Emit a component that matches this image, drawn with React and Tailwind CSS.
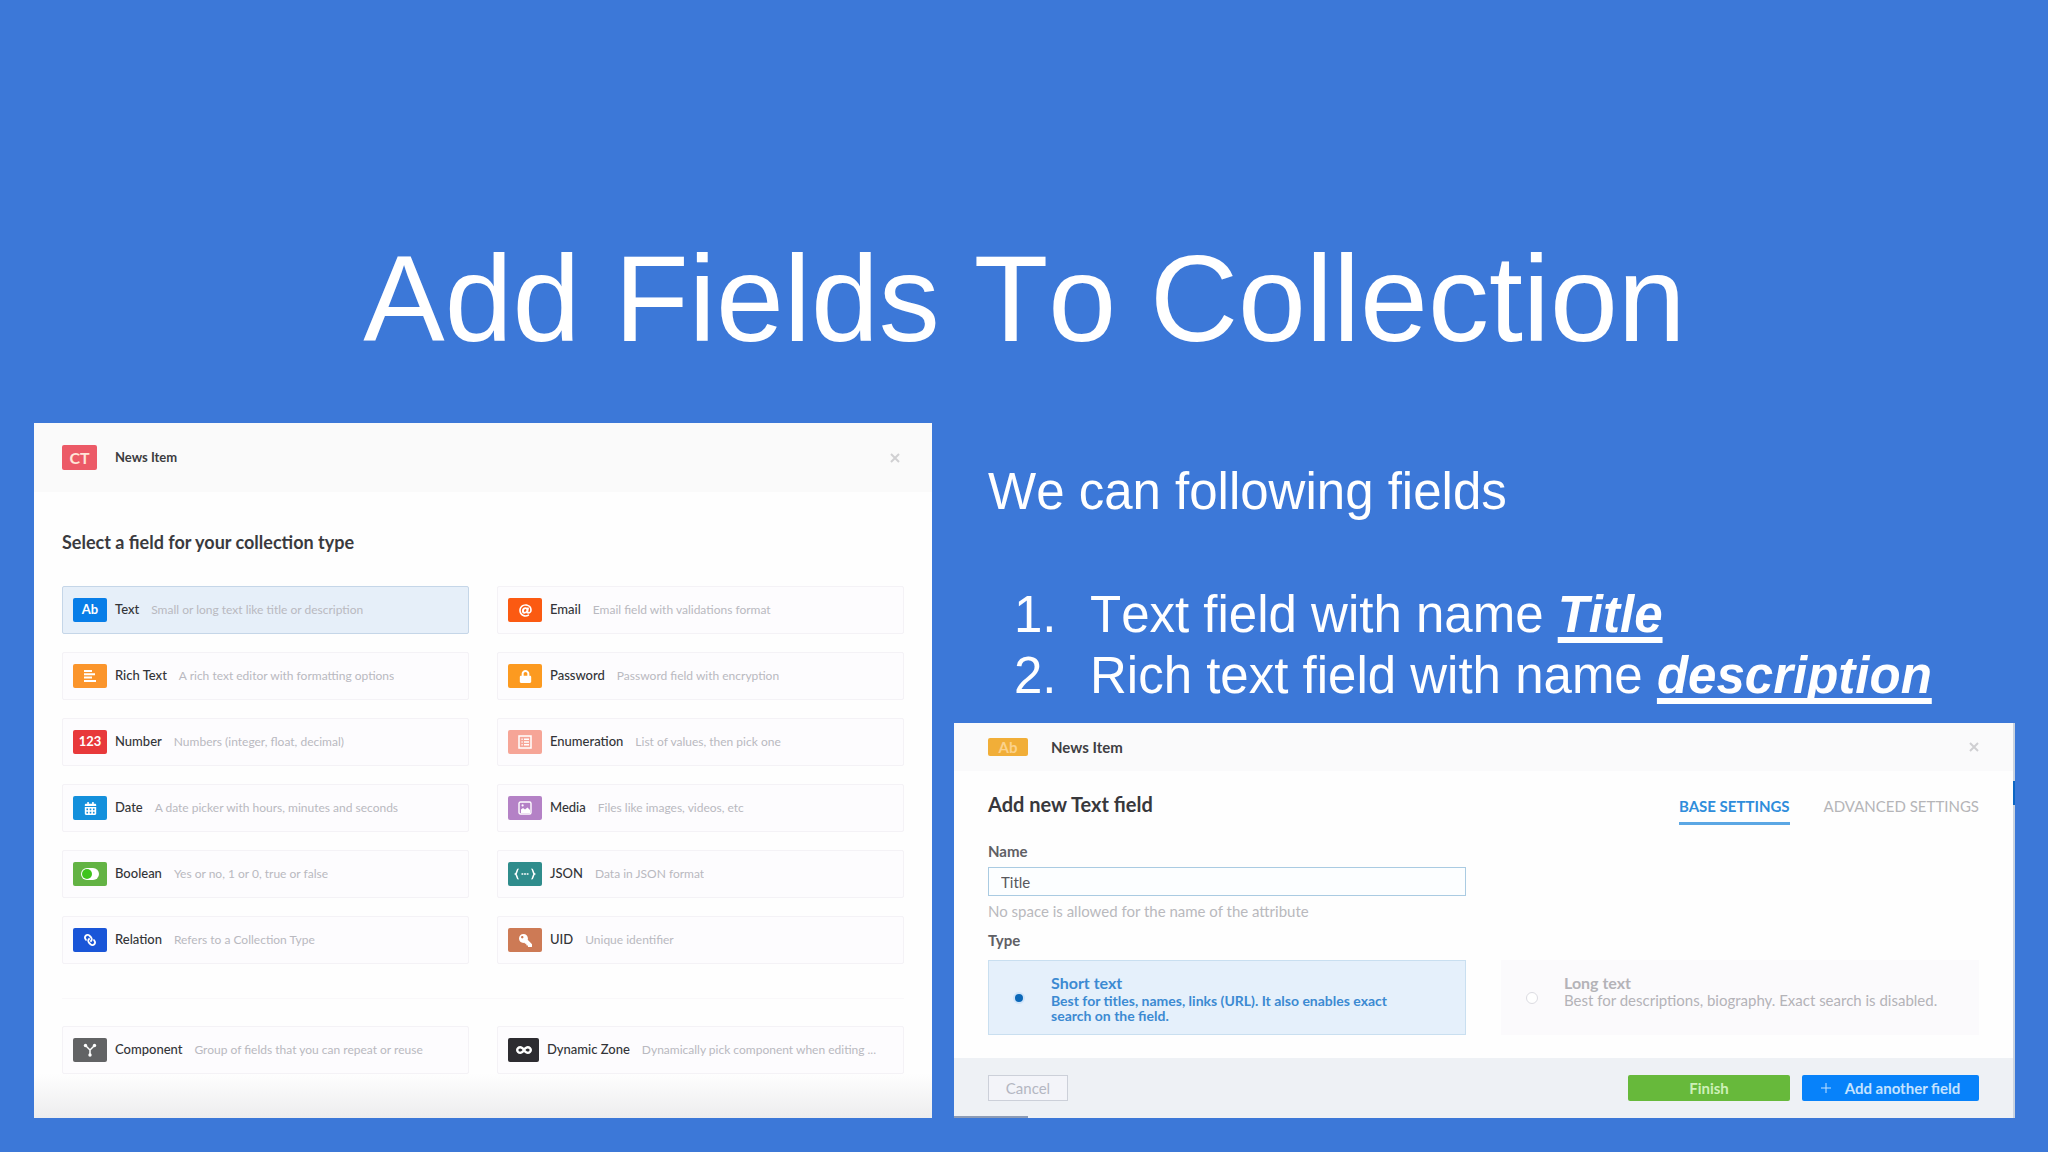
import React, { useState } from "react";
import { FaAt, FaLock, FaCalendarAlt, FaLink, FaKey, FaInfinity } from "react-icons/fa";

const RichTextIcon = () => (
  <svg viewBox="0 0 14 12" className="h-3 w-3.5" fill="currentColor">
    <path d="M1 0h8v2H1zM1 3.3h11v2H1zM1 6.6h8v2H1zM1 10h12v2H1z" />
  </svg>
);

const ListIcon = () => (
  <svg viewBox="0 0 14 14" className="size-3.5" fill="none" stroke="currentColor" strokeWidth="1.5">
    <path d="M1 1h12v12H1zM3.5 4.2h1.2M6 4.2h5M3.5 7h1.2M6 7h5M3.5 9.8h1.2M6 9.8h5" />
  </svg>
);

const MediaIcon = () => (
  <svg viewBox="0 0 14 14" className="size-3.5" fill="none" stroke="currentColor" strokeWidth="1.4">
    <rect x="1" y="1" width="12" height="12" rx="1.5" />
    <path d="M3 12V8.5l2-1.5 2 1.5 2.5-2L12 9v3z" fill="currentColor" stroke="none" />
    <circle cx="4.6" cy="4.4" r="1.1" fill="currentColor" stroke="none" />
  </svg>
);

const ToggleIcon = () => (
  <svg viewBox="0 0 20 14" className="h-3.5 w-5">
    <rect x="1" y="1" width="18" height="12" rx="6" fill="#ffffff" />
    <circle cx="7" cy="7" r="5" fill="#3fc41c" />
  </svg>
);

const JsonIcon = () => (
  <svg viewBox="0 0 22 12" className="h-3 w-5.5" fill="none" stroke="currentColor" strokeWidth="1.5">
    <path d="M4.5 1C2.500 1 3.500 5 1.500 6c2 1 1 5 3 5M17.500 1c2 0 1 4 3 5-2 1-1 5-3 5" />
    <path d="M7.500 6h7" strokeDasharray="1.800 0.800" />
  </svg>
);

const ComponentIcon = () => (
  <svg viewBox="0 0 14 14" className="size-3.5" fill="none" stroke="currentColor" strokeWidth="1.5">
    <path d="M7 12V7L3 3M7 7l4-4" />
    <g fill="currentColor" stroke="none">
      <circle cx="2.500" cy="2.500" r="1.700" />
      <circle cx="11.500" cy="2.500" r="1.700" />
      <circle cx="7" cy="12" r="1.700" />
    </g>
  </svg>
);

const fields = [
  { name: "Text", note: "Small or long text like title or description", color: "bg-[#087ee8]", icon: "Ab" },
  { name: "Email", note: "Email field with validations format", color: "bg-[#fb5a12]", icon: <FaAt /> },
  { name: "Rich Text", note: "A rich text editor with formatting options", color: "bg-[#fb952c]", icon: <RichTextIcon /> },
  { name: "Password", note: "Password field with encryption", color: "bg-[#fc9a20]", icon: <FaLock /> },
  { name: "Number", note: "Numbers (integer, float, decimal)", color: "bg-[#e8393b]", icon: "123" },
  { name: "Enumeration", note: "List of values, then pick one", color: "bg-[#f6a597]", icon: <ListIcon /> },
  { name: "Date", note: "A date picker with hours, minutes and seconds", color: "bg-[#1490dc]", icon: <FaCalendarAlt /> },
  { name: "Media", note: "Files like images, videos, etc", color: "bg-[#b481c6]", icon: <MediaIcon /> },
  { name: "Boolean", note: "Yes or no, 1 or 0, true or false", color: "bg-[#63b344]", icon: <ToggleIcon /> },
  { name: "JSON", note: "Data in JSON format", color: "bg-[#2f8c8c]", icon: <JsonIcon /> },
  { name: "Relation", note: "Refers to a Collection Type", color: "bg-[#1a56d8]", icon: <FaLink className="size-3 -scale-x-100" /> },
  { name: "UID", note: "Unique identifier", color: "bg-[#cd7a55]", icon: <FaKey className="-scale-x-100" /> },
];

const extras = [
  { name: "Component", note: "Group of fields that you can repeat or reuse", color: "bg-[#626365]", icon: <ComponentIcon /> },
  { name: "Dynamic Zone", note: "Dynamically pick component when editing ...", color: "bg-[#2d2c31]", icon: <FaInfinity className="size-4" />, narrow: true },
];

function FieldCard({ field, selected, onSelect }) {
  return (
    <button
      type="button"
      onClick={onSelect}
      aria-pressed={selected}
      className={`flex h-12 min-w-0 items-center gap-2 rounded-xs border px-2.5 text-left ${
        selected ? "border-[#c5d6e8] bg-[#e6eff9]" : "border-[#f4f2f6] bg-[#fdfcfe]"
      }`}
    >
      <span
        className={`flex h-6 shrink-0 items-center justify-center rounded-xs text-[13px] font-bold text-white ${
          field.narrow ? "w-[31px]" : "w-[34px]"
        } ${field.color}`}
      >
        {field.icon}
      </span>
      <span className="shrink-0 text-[13px] font-medium text-[#333438]">{field.name}</span>
      <span className="truncate pl-1 text-xs text-[#b9b9c0]">{field.note}</span>
    </button>
  );
}

function CloseIcon() {
  return (
    <svg viewBox="0 0 10 10" className="size-2.5" fill="none" stroke="currentColor" strokeWidth="2">
      <path d="M1 1l8 8M9 1L1 9" />
    </svg>
  );
}

function FieldPicker() {
  const [picked, setPicked] = useState("Text");
  const card = (f) => (
    <FieldCard key={f.name} field={f} selected={picked === f.name} onSelect={() => setPicked(f.name)} />
  );
  return (
    <section className="flex flex-col bg-[#fefefe] font-[Lato,sans-serif]">
      <header className="flex h-[69px] items-center bg-[#fafafa] px-7">
        <span className="flex h-[25px] w-[35px] items-center justify-center rounded-xs bg-[#ec5a67] text-base font-bold text-[#ffe6d8]">CT</span>
        <span className="ml-[18px] text-[13px] font-bold text-[#3c3c40]">News Item</span>
        <button type="button" aria-label="Close" className="ml-auto p-1 text-[#d0d0d2]">
          <CloseIcon />
        </button>
      </header>
      <div className="px-7 pt-9">
        <h2 className="text-lg leading-7 font-bold text-[#3a3a3e]">Select a field for your collection type</h2>
        <div className="mt-[30px] grid grid-cols-2 gap-x-7 gap-y-[18px]">{fields.map(card)}</div>
        <hr className="mt-[34px] border-[#f9f8fa]" />
        <div className="mt-[27px] grid grid-cols-2 gap-x-7">{extras.map(card)}</div>
      </div>
      <div className="mt-auto h-11 bg-linear-to-b from-[#fefefe] to-[#ededee]" />
    </section>
  );
}

function TypeOption({ value, title, note, checked, onChange }) {
  return (
    <label
      className={`flex h-[75px] items-center border pl-6 ${
        checked ? "border-[#c9dff0] bg-[#e5f0fb] pr-12 text-[#3c8ad2]" : "border-[#fbfafc] bg-[#fbfafc] pr-4 text-[#b4b3b8]"
      }`}
    >
      <input
        type="radio"
        name="type"
        value={value}
        checked={checked}
        onChange={onChange}
        className="size-3 shrink-0 appearance-none rounded-full border border-[#dcdce2] bg-white checked:border-2 checked:border-[#cfe4fa] checked:bg-[#0b68b8]"
      />
      <span className="ml-[26px] flex flex-col self-start pt-3">
        <span className="text-base leading-5 font-bold">{title}</span>
        <span className={`leading-[15px] ${checked ? "text-sm font-bold" : "text-[15px]"}`}>{note}</span>
      </span>
    </label>
  );
}

function FieldEditor() {
  const [type, setType] = useState("short");
  const [name, setName] = useState("Title");
  return (
    <section className="relative flex flex-col border-r-2 border-[#c9d3e0] bg-[#fefefe] font-[Lato,sans-serif]">
      <span className="absolute top-[58px] -right-0.5 h-6 w-0.5 bg-[#0d67c4]" />
      <span className="absolute bottom-0 left-0 h-0.5 w-[74px] bg-[#8c9bb5]" />
      <header className="flex h-12 items-center bg-[#fafafb] px-[34px]">
        <span className="flex h-[18px] w-10 items-center justify-center rounded-xs bg-[#f1ae38] text-[15px] font-bold text-[#fbd28c]">Ab</span>
        <span className="ml-[23px] text-[15px] font-bold text-[#3f3f43]">News Item</span>
        <button type="button" aria-label="Close" className="ml-auto text-[#cfcfd2]">
          <CloseIcon />
        </button>
      </header>
      <div className="px-[34px] pt-[19px]">
        <div className="flex items-start justify-between">
          <h2 className="text-xl leading-7 font-bold text-[#38383c]">Add new Text field</h2>
          <nav className="flex gap-[34px] pt-1.5 text-[15px] leading-5 font-bold">
            <a href="#base" className="border-b-3 border-[#5ba7e4] pb-1.5 text-[#2f8ddb]">BASE SETTINGS</a>
            <a href="#advanced" className="pb-1.5 font-normal text-[#b5b5b8]">ADVANCED SETTINGS</a>
          </nav>
        </div>
        <div className="mt-[18px] grid grid-cols-2 gap-x-[35px]">
          <div className="flex flex-col">
            <label htmlFor="field-name" className="text-[15px] leading-4 font-bold text-[#606065]">Name</label>
            <input
              id="field-name"
              value={name}
              onChange={(e) => setName(e.target.value)}
              className="mt-2 h-[29px] border border-[#aacbe2] bg-[#fcfeff] px-3 text-[15px] text-[#58585c] outline-none"
            />
            <p className="mt-[7px] text-[15px] leading-4 text-[#b9b9bd]">No space is allowed for the name of the attribute</p>
          </div>
        </div>
        <fieldset className="mt-[13px]">
          <legend className="text-[15px] leading-4 font-bold text-[#606065]">Type</legend>
          <div className="mt-3 grid grid-cols-2 gap-x-[35px]">
            <TypeOption
              value="short"
              title="Short text"
              note="Best for titles, names, links (URL). It also enables exact search on the field."
              checked={type === "short"}
              onChange={() => setType("short")}
            />
            <TypeOption
              value="long"
              title="Long text"
              note="Best for descriptions, biography. Exact search is disabled."
              checked={type === "long"}
              onChange={() => setType("long")}
            />
          </div>
        </fieldset>
      </div>
      <footer className="mt-auto flex h-[60px] items-center bg-[#eef1f5] px-[34px] text-[15px]">
        <button type="button" className="h-[26px] w-20 border border-[#ccd0d9] bg-[#f3f4f9] text-[#b4b7c2]">Cancel</button>
        <button type="button" className="ml-auto h-[26px] w-[162px] rounded-xs bg-[#67b93b] font-bold text-[#cdf0b8]">Finish</button>
        <button type="button" className="ml-3 flex h-[26px] w-[177px] items-center justify-center gap-3.5 rounded-xs bg-[#0782fa] font-bold text-[#c4e2ff]">
          <svg viewBox="0 0 10 10" className="size-2.5" stroke="currentColor" strokeWidth="1">
            <path d="M5 0v10M0 5h10" />
          </svg>
          Add another field
        </button>
      </footer>
    </section>
  );
}

export default function App() {
  return (
    <main className="min-h-screen bg-[#3c78d8] pt-[228px] pr-[33px] pb-[34px] pl-[34px] font-['Liberation_Sans',Arial,sans-serif] text-white">
      <h1 className="text-center text-[122px] leading-[142px] [font-kerning:none]">Add Fields To Collection</h1>
      <div className="mt-[53px] grid grid-cols-[898fr_1061fr] gap-[22px]">
        <FieldPicker />
        <div className="flex flex-col text-[51px] leading-[61px]">
          <div className="pt-[38px] pb-[17px] pl-[34px] [font-kerning:none]">
            <p>We can following fields</p>
            <ol className="mt-[62px] list-none">
              <li className="flex">
                <span className="w-[102px] pl-[26px]">1.</span>
                <span>
                  Text field with name <strong className="italic underline decoration-6 underline-offset-5">Title</strong>
                </span>
              </li>
              <li className="flex">
                <span className="w-[102px] pl-[26px]">2.</span>
                <span>
                  Rich text field with name <strong className="italic underline decoration-6 underline-offset-5 [text-decoration-skip-ink:none]">description</strong>
                </span>
              </li>
            </ol>
          </div>
          <div className="grid min-h-[395px] grow text-base leading-normal">
            <FieldEditor />
          </div>
        </div>
      </div>
    </main>
  );
}
